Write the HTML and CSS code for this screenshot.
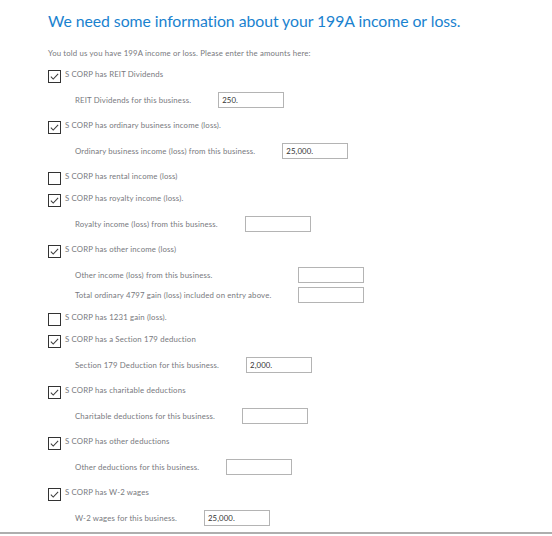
FILE: index.html
```html
<!DOCTYPE html>
<html lang="en">
<head>
<meta charset="utf-8">
<title>199A income or loss</title>
<link rel="stylesheet" href="styles.css">
</head>
<body>
<main class="page">
  <h1 class="title">We need some information about your 199A income or loss.</h1>
  <p class="intro">You told us you have 199A income or loss. Please enter the amounts here:</p>

  <div class="check"><span class="box on"><svg viewBox="0 0 13 13"><path d="M2.2 6.6 L5 9.6 L10.8 3.4"/></svg></span><span class="check-label">S CORP has REIT Dividends</span></div>
  <div class="group">
    <span class="field-label">REIT Dividends for this business.</span><span class="input">250.</span>
  </div>

  <div class="check"><span class="box on"><svg viewBox="0 0 13 13"><path d="M2.2 6.6 L5 9.6 L10.8 3.4"/></svg></span><span class="check-label">S CORP has ordinary business income (loss).</span></div>
  <div class="group">
    <span class="field-label">Ordinary business income (loss) from this business.</span><span class="input">25,000.</span>
  </div>

  <div class="check"><span class="box"></span><span class="check-label">S CORP has rental income (loss)</span></div>

  <div class="check"><span class="box on"><svg viewBox="0 0 13 13"><path d="M2.2 6.6 L5 9.6 L10.8 3.4"/></svg></span><span class="check-label">S CORP has royalty income (loss).</span></div>
  <div class="group">
    <span class="field-label">Royalty income (loss) from this business.</span><span class="input"></span>
  </div>

  <div class="check"><span class="box on"><svg viewBox="0 0 13 13"><path d="M2.2 6.6 L5 9.6 L10.8 3.4"/></svg></span><span class="check-label">S CORP has other income (loss)</span></div>
  <div class="group group-multi">
    <span class="field-label">Other income (loss) from this business.</span><span class="input"></span>
    <span class="field-label">Total ordinary 4797 gain (loss) included on entry above.</span><span class="input"></span>
  </div>

  <div class="check"><span class="box"></span><span class="check-label">S CORP has 1231 gain (loss).</span></div>

  <div class="check"><span class="box on"><svg viewBox="0 0 13 13"><path d="M2.2 6.6 L5 9.6 L10.8 3.4"/></svg></span><span class="check-label">S CORP has a Section 179 deduction</span></div>
  <div class="group">
    <span class="field-label">Section 179 Deduction for this business.</span><span class="input">2,000.</span>
  </div>

  <div class="check"><span class="box on"><svg viewBox="0 0 13 13"><path d="M2.2 6.6 L5 9.6 L10.8 3.4"/></svg></span><span class="check-label">S CORP has charitable deductions</span></div>
  <div class="group">
    <span class="field-label">Charitable deductions for this business.</span><span class="input"></span>
  </div>

  <div class="check"><span class="box on"><svg viewBox="0 0 13 13"><path d="M2.2 6.6 L5 9.6 L10.8 3.4"/></svg></span><span class="check-label">S CORP has other deductions</span></div>
  <div class="group">
    <span class="field-label">Other deductions for this business.</span><span class="input"></span>
  </div>

  <div class="check"><span class="box on"><svg viewBox="0 0 13 13"><path d="M2.2 6.6 L5 9.6 L10.8 3.4"/></svg></span><span class="check-label">S CORP has W-2 wages</span></div>
  <div class="group group-last">
    <span class="field-label">W-2 wages for this business.</span><span class="input">25,000.</span>
  </div>
</main>
<div class="rule"></div>
</body>
</html>
```
FILE: styles.css
```css
html, body {
  margin: 0;
  padding: 0;
  background: #ffffff;
}

body {
  font-family: Lato, "Noto Sans", "Liberation Sans", sans-serif;
  color: #78797e;
  width: 552px;
  height: 536px;
  overflow: hidden;
}

.page {
  padding: 10px 0 0 48px;
}

.title {
  margin: 0;
  font-size: 15.8px;
  line-height: 22px;
  font-weight: 400;
  letter-spacing: -0.05px;
  color: #1a82cf;
}

.intro {
  margin: 16px 0 0;
  font-size: 7.8px;
  line-height: 10px;
  letter-spacing: 0.15px;
}

.check {
  display: flex;
  align-items: flex-start;
  gap: 4px;
  height: 13px;
  margin-top: 9px;
}

.intro + .check {
  margin-top: 12px;
}

.box {
  width: 13px;
  height: 13px;
  box-sizing: border-box;
  border: 1px solid #333333;
  flex: none;
  display: flex;
}

.box svg {
  width: 11px;
  height: 11px;
}

.box path {
  fill: none;
  stroke: #3a3a3a;
  stroke-width: 1.2;
}

.check-label,
.field-label {
  font-size: 7.8px;
  line-height: 9px;
  letter-spacing: 0.15px;
}

.group {
  display: grid;
  grid-template-columns: max-content 66px;
  column-gap: 27px;
  row-gap: 4px;
  align-items: center;
  margin: 9px 0 13px 27px;
}

.group-multi {
  margin-bottom: 10px;
}

.input {
  box-sizing: border-box;
  height: 16px;
  border: 1px solid #b4b4b4;
  padding: 0 3px;
  font-size: 7.8px;
  line-height: 14px;
  letter-spacing: 0.1px;
  color: #333333;
}

.rule {
  position: absolute;
  left: 0;
  right: 0;
  top: 532px;
  height: 2px;
  background: #aeaeae;
}
```
